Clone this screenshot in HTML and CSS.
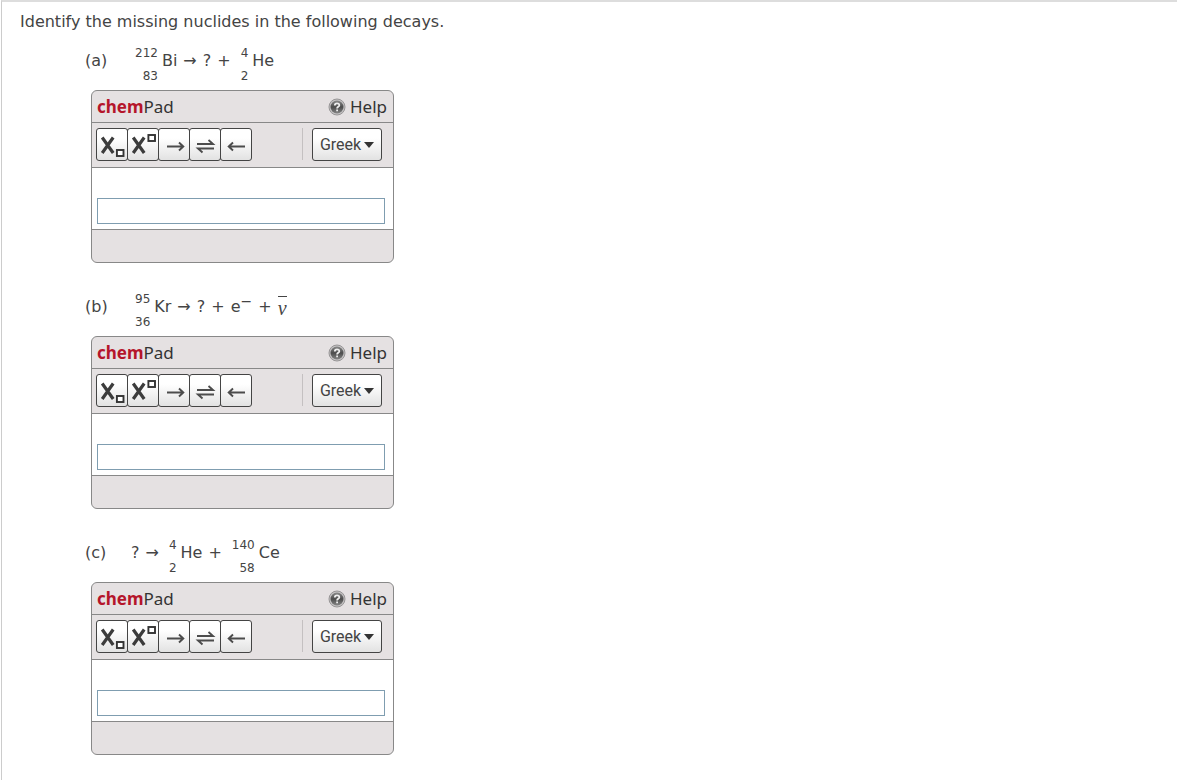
FILE: index.html
```
<!DOCTYPE html>
<html lang="en">
<head>
  <meta charset="UTF-8">
  <meta name="viewport" content="width=device-width, initial-scale=1.0">
  <title>Nuclear Decays</title>
  <link rel="stylesheet" href="styles.css">
</head>
<body>
  <!-- shared icons -->
  <svg class="defs" width="0" height="0" aria-hidden="true">
    <defs>
      <linearGradient id="ball" x1="0" y1="0" x2="0" y2="1">
        <stop offset="0" stop-color="#8a8a8a"/>
        <stop offset="0.5" stop-color="#4c4c4c"/>
        <stop offset="1" stop-color="#858585"/>
      </linearGradient>
      <symbol id="i-help" viewBox="0 0 18 18">
        <circle cx="9" cy="9" r="8" fill="#c4c2c3" stroke="#979596"/>
        <circle cx="9" cy="9" r="6.5" fill="url(#ball)"/>
        <path d="M6.8 7.4C6.8 4.6 11.3 4.7 11.3 7.2C11.3 8.8 9.1 8.8 9.1 10.4M9.1 11.6V13.2" fill="none" stroke="#eee" stroke-width="1.8"/>
      </symbol>
      <symbol id="i-sub" viewBox="0 0 30 30">
        <path d="M5.2 7.5L16.2 23M16.2 7.5L5.2 23" fill="none" stroke="#3c3c3c" stroke-width="3.2"/>
        <rect x="19.9" y="20" width="6.6" height="6" fill="#fff" stroke="#333" stroke-width="1.9"/>
      </symbol>
      <symbol id="i-sup" viewBox="0 0 30 30">
        <path d="M5.2 7.5L16.2 23M16.2 7.5L5.2 23" fill="none" stroke="#3c3c3c" stroke-width="3.2"/>
        <rect x="20.4" y="5" width="6.6" height="6" fill="#fff" stroke="#333" stroke-width="1.9"/>
      </symbol>
      <symbol id="i-right" viewBox="0 0 30 30">
        <path d="M8 16.5H24M20 12.5L24.3 16.5L20 20.5" fill="none" stroke="#4c4c4c" stroke-width="1.9"/>
      </symbol>
      <symbol id="i-equil" viewBox="0 0 30 30">
        <path d="M7 14H23L18.5 10M24 18.5H8L12.5 22.5" fill="none" stroke="#4c4c4c" stroke-width="1.9"/>
      </symbol>
      <symbol id="i-left" viewBox="0 0 30 30">
        <path d="M24 16.5H8M12 12.5L7.7 16.5L12 20.5" fill="none" stroke="#4c4c4c" stroke-width="1.9"/>
      </symbol>
    </defs>
  </svg>

  <main class="question">
    <p class="prompt">Identify the missing nuclides in the following decays.</p>

    <section class="part">
      <div class="equation">
        <span class="label">(a)</span>
        <span class="nuclide"><span class="nums"><span>212</span><span>83</span></span>Bi</span>
        <span>→</span>
        <span>?</span>
        <span>+</span>
        <span class="nuclide"><span class="nums"><span>4</span><span>2</span></span>He</span>
      </div>
      <div class="chempad">
        <div class="pad-head">
          <span class="brand"><b>chem</b>Pad</span>
          <a class="help" href="#"><svg><use href="#i-help"/></svg>Help</a>
        </div>
        <div class="toolbar">
          <div class="tools">
            <button type="button" aria-label="Subscript"><svg><use href="#i-sub"/></svg></button>
            <button type="button" aria-label="Superscript"><svg><use href="#i-sup"/></svg></button>
            <button type="button" aria-label="Right arrow"><svg><use href="#i-right"/></svg></button>
            <button type="button" aria-label="Equilibrium arrows"><svg><use href="#i-equil"/></svg></button>
            <button type="button" aria-label="Left arrow"><svg><use href="#i-left"/></svg></button>
          </div>
          <div class="greek-wrap"><button type="button" class="greek">Greek</button></div>
        </div>
        <div class="entry"><input type="text" aria-label="Answer (a)"></div>
        <div class="pad-foot"></div>
      </div>
    </section>

    <section class="part">
      <div class="equation">
        <span class="label">(b)</span>
        <span class="nuclide"><span class="nums"><span>95</span><span>36</span></span>Kr</span>
        <span>→</span>
        <span>?</span>
        <span>+</span>
        <span>e<sup>−</sup></span>
        <span>+</span>
        <span class="nu">ν</span>
      </div>
      <div class="chempad">
        <div class="pad-head">
          <span class="brand"><b>chem</b>Pad</span>
          <a class="help" href="#"><svg><use href="#i-help"/></svg>Help</a>
        </div>
        <div class="toolbar">
          <div class="tools">
            <button type="button" aria-label="Subscript"><svg><use href="#i-sub"/></svg></button>
            <button type="button" aria-label="Superscript"><svg><use href="#i-sup"/></svg></button>
            <button type="button" aria-label="Right arrow"><svg><use href="#i-right"/></svg></button>
            <button type="button" aria-label="Equilibrium arrows"><svg><use href="#i-equil"/></svg></button>
            <button type="button" aria-label="Left arrow"><svg><use href="#i-left"/></svg></button>
          </div>
          <div class="greek-wrap"><button type="button" class="greek">Greek</button></div>
        </div>
        <div class="entry"><input type="text" aria-label="Answer (b)"></div>
        <div class="pad-foot"></div>
      </div>
    </section>

    <section class="part">
      <div class="equation">
        <span class="label">(c)</span>
        <span>?</span>
        <span>→</span>
        <span class="nuclide"><span class="nums"><span>4</span><span>2</span></span>He</span>
        <span>+</span>
        <span class="nuclide"><span class="nums"><span>140</span><span>58</span></span>Ce</span>
      </div>
      <div class="chempad">
        <div class="pad-head">
          <span class="brand"><b>chem</b>Pad</span>
          <a class="help" href="#"><svg><use href="#i-help"/></svg>Help</a>
        </div>
        <div class="toolbar">
          <div class="tools">
            <button type="button" aria-label="Subscript"><svg><use href="#i-sub"/></svg></button>
            <button type="button" aria-label="Superscript"><svg><use href="#i-sup"/></svg></button>
            <button type="button" aria-label="Right arrow"><svg><use href="#i-right"/></svg></button>
            <button type="button" aria-label="Equilibrium arrows"><svg><use href="#i-equil"/></svg></button>
            <button type="button" aria-label="Left arrow"><svg><use href="#i-left"/></svg></button>
          </div>
          <div class="greek-wrap"><button type="button" class="greek">Greek</button></div>
        </div>
        <div class="entry"><input type="text" aria-label="Answer (c)"></div>
        <div class="pad-foot"></div>
      </div>
    </section>
  </main>
</body>
</html>
```
FILE: styles.css
```
* {
  box-sizing: border-box;
}
body {
  margin: 0;
  background: #fff;
  color: #444;
  font-family: Verdana, "DejaVu Sans", sans-serif;
  font-size: 16px;
  line-height: 20px;
}
.defs {
  position: absolute;
}
.question {
  min-height: 100vh;
  margin-left: 1px;
  padding: 10px 18px 24px;
  border-top: 2px solid #ddd;
  border-left: 1px solid #ccc;
}
.prompt {
  margin: 0 0 10px;
}
.part {
  margin: 0 0 25px 65px;
}
.equation {
  display: flex;
  align-items: center;
  gap: 6px;
  height: 38px;
  margin-bottom: 10px;
}
.label {
  width: 40px;
}
.nuclide {
  display: flex;
  align-items: center;
  gap: 4px;
  margin-left: 4px;
}
.nums {
  display: flex;
  flex-direction: column;
  align-items: flex-end;
  padding-top: 8px;
  font-size: 12px;
  line-height: 23px;
}
.equation sup {
  font-size: 14px;
  line-height: 0;
}
.nu {
  padding-top: 1px;
  border-top: 1px solid #444;
  font-family: "Liberation Serif", serif;
  font-size: 20px;
  font-style: italic;
}

/* chemPad */
.chempad {
  width: 303px;
  margin-left: 6px;
  border: 1px solid #888;
  border-radius: 6px;
  background: #e5e1e2;
  overflow: hidden;
}
.pad-head {
  display: flex;
  justify-content: space-between;
  align-items: center;
  height: 32px;
  padding: 1px 6px 0 5px;
  border-bottom: 1px solid #888;
  color: #333;
  font-family: "Noto Sans", sans-serif;
  font-size: 17px;
}
.brand b {
  color: #b5152b;
}
.help {
  display: flex;
  align-items: center;
  gap: 4px;
  color: #333;
  text-decoration: none;
}
.help svg {
  width: 18px;
  height: 18px;
}
.toolbar {
  display: flex;
  justify-content: space-between;
  height: 45px;
  padding: 5px 11px 6px 4px;
  border-bottom: 1px solid #888;
}
.tools {
  display: flex;
}
.toolbar button {
  height: 33px;
  padding: 0;
  border: 1px solid #444;
  border-radius: 3px;
  background: linear-gradient(#fff 30%, #e2e2e2);
  cursor: pointer;
}
.tools button {
  width: 32px;
}
.tools button + button {
  margin-left: -1px;
}
.tools svg {
  display: block;
  width: 30px;
  height: 30px;
}
.greek-wrap {
  height: 32px;
  padding-left: 9px;
  border-left: 1px solid #c4c0c1;
}
.toolbar .greek {
  display: flex;
  align-items: center;
  justify-content: center;
  gap: 3px;
  width: 70px;
  color: #444;
  font-family: Roboto, sans-serif;
  font-size: 16px;
}
.greek::after {
  content: "";
  border: 5px solid transparent;
  border-top: 6px solid #333;
  border-bottom: 0;
}
.entry {
  height: 62px;
  padding: 30px 8px 5px 5px;
  border-bottom: 1px solid #888;
  background: #fff;
}
.entry input {
  display: block;
  width: 100%;
  height: 26px;
  padding: 2px 4px;
  border: 1px solid #7f9db0;
  background: #fff;
  font: inherit;
}
.pad-foot {
  height: 32px;
}
```
